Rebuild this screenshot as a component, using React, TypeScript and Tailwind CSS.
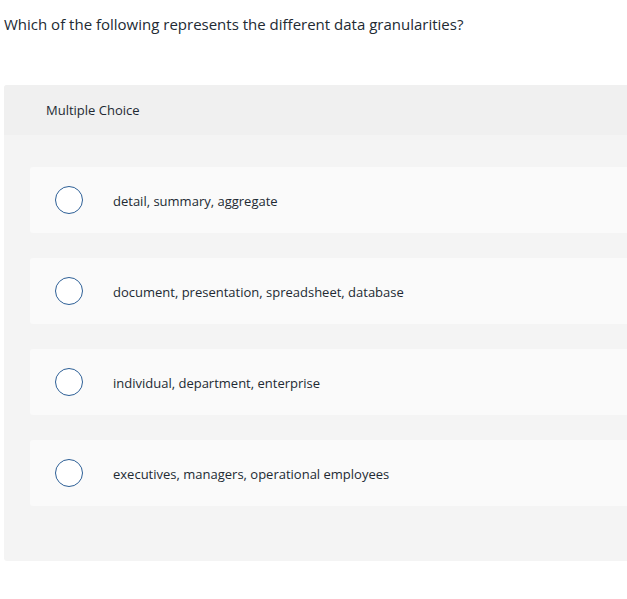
import React from "react";

const options = [
  "detail, summary, aggregate",
  "document, presentation, spreadsheet, database",
  "individual, department, enterprise",
  "executives, managers, operational employees",
];

export default function App() {
  return (
    <div
      className="w-[627px] h-[599px] bg-white text-[#222a33]"
      style={{ fontFamily: "'Open Sans', Lato, sans-serif" }}
    >
      <div className="pl-[4px] pt-[14px] h-[85px] text-[15px] leading-[20px]">
        Which of the following represents the different data granularities?
      </div>
      <div className="ml-[4px] rounded-tl-[3px] rounded-bl-[3px] bg-[#f4f4f4] h-[476px]">
        <div className="h-[50px] bg-[#f0f0f0] rounded-tl-[3px] flex items-center pl-[42px] pt-[2px] text-[13px]">
          Multiple Choice
        </div>
        <div className="pt-[32px] pl-[26px] flex flex-col gap-[25px]">
          {options.map((o) => (
            <div
              key={o}
              className="h-[66px] bg-[#fafafa] rounded-l-[3px] flex items-center"
            >
              <div className="ml-[25px] w-[28px] h-[28px] rounded-full border-[1.5px] border-[#2d5f96] bg-white" />
              <div className="ml-[30px] pt-[4px] text-[13px]">{o}</div>
            </div>
          ))}
        </div>
      </div>
    </div>
  );
}
